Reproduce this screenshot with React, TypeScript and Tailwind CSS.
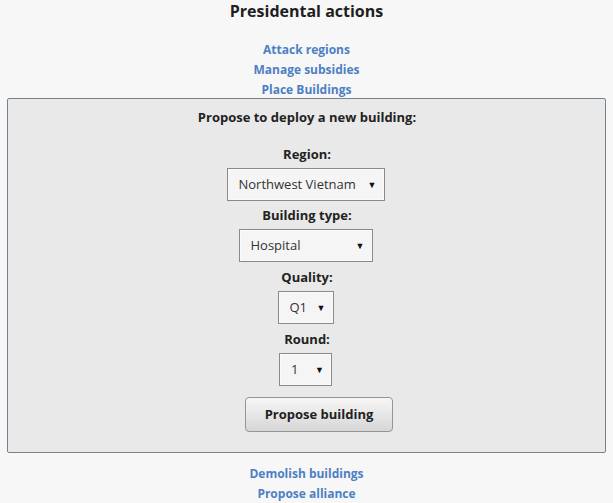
import React from "react";

function Sel({ text, w }: { text: string; w: string }) {
  return (
    <div
      className={`${w} mr-[3px] h-[33px] border border-[#8a8a8a] bg-[#f5f5f5] flex items-center justify-between pl-[11px] pr-[7px] text-[13px] text-[#333] shadow-[inset_0_0_0_1px_#fafafa]`}
    >
      <span>{text}</span>
      <span className="text-[9px] text-[#111]">▼</span>
    </div>
  );
}

export default function App() {
  return (
    <div
      className="min-h-[503px] w-[613px] bg-[#f7f7f7] text-[#222]"
      style={{ fontFamily: '"Open Sans", "Liberation Sans", sans-serif' }}
    >
      <div className="flex flex-col items-center">
        <h1 className="text-[16px] font-bold leading-[24px] mt-[-1px] text-[#1e1e1e]">Presidental actions</h1>
        <div className="mt-[17px] flex flex-col items-center text-[12px] font-bold leading-[20px] text-[#4d7fc4]">
          <a>Attack regions</a>
          <a>Manage subsidies</a>
          <a>Place Buildings</a>
        </div>
      </div>
      <div className="mx-[7px] -mt-[2px] border border-[#74838f] rounded-[2px] bg-[#e9e9e9] flex flex-col items-center pt-[8px] pb-[20px] pl-[1px]">
        <div className="text-[13px] font-bold leading-[20px]">Propose to deploy a new building:</div>
        <div className="mt-[17px] text-[13px] font-bold leading-[20px]">Region:</div>
        <div className="mt-[4px]"><Sel text="Northwest Vietnam" w="w-[158px]" /></div>
        <div className="mt-[4px] text-[13px] font-bold leading-[20px]">Building type:</div>
        <div className="mt-[4px]"><Sel text="Hospital" w="w-[134px]" /></div>
        <div className="mt-[5px] text-[13px] font-bold leading-[20px]">Quality:</div>
        <div className="mt-[4px]"><Sel text="Q1" w="w-[56px]" /></div>
        <div className="mt-[5px] text-[13px] font-bold leading-[20px]">Round:</div>
        <div className="mt-[4px]"><Sel text="1" w="w-[53px]" /></div>
        <button className="mt-[11px] ml-[24px] w-[148px] h-[35px] border border-[#959595] rounded-[4px] bg-gradient-to-b from-[#f7f7f7] to-[#d6d6d6] text-[13px] font-bold text-[#222]">
          Propose building
        </button>
      </div>
      <div className="mt-[11px] flex flex-col items-center text-[12px] font-bold leading-[20px] text-[#4d7fc4]">
        <a>Demolish buildings</a>
        <a>Propose alliance</a>
      </div>
    </div>
  );
}
